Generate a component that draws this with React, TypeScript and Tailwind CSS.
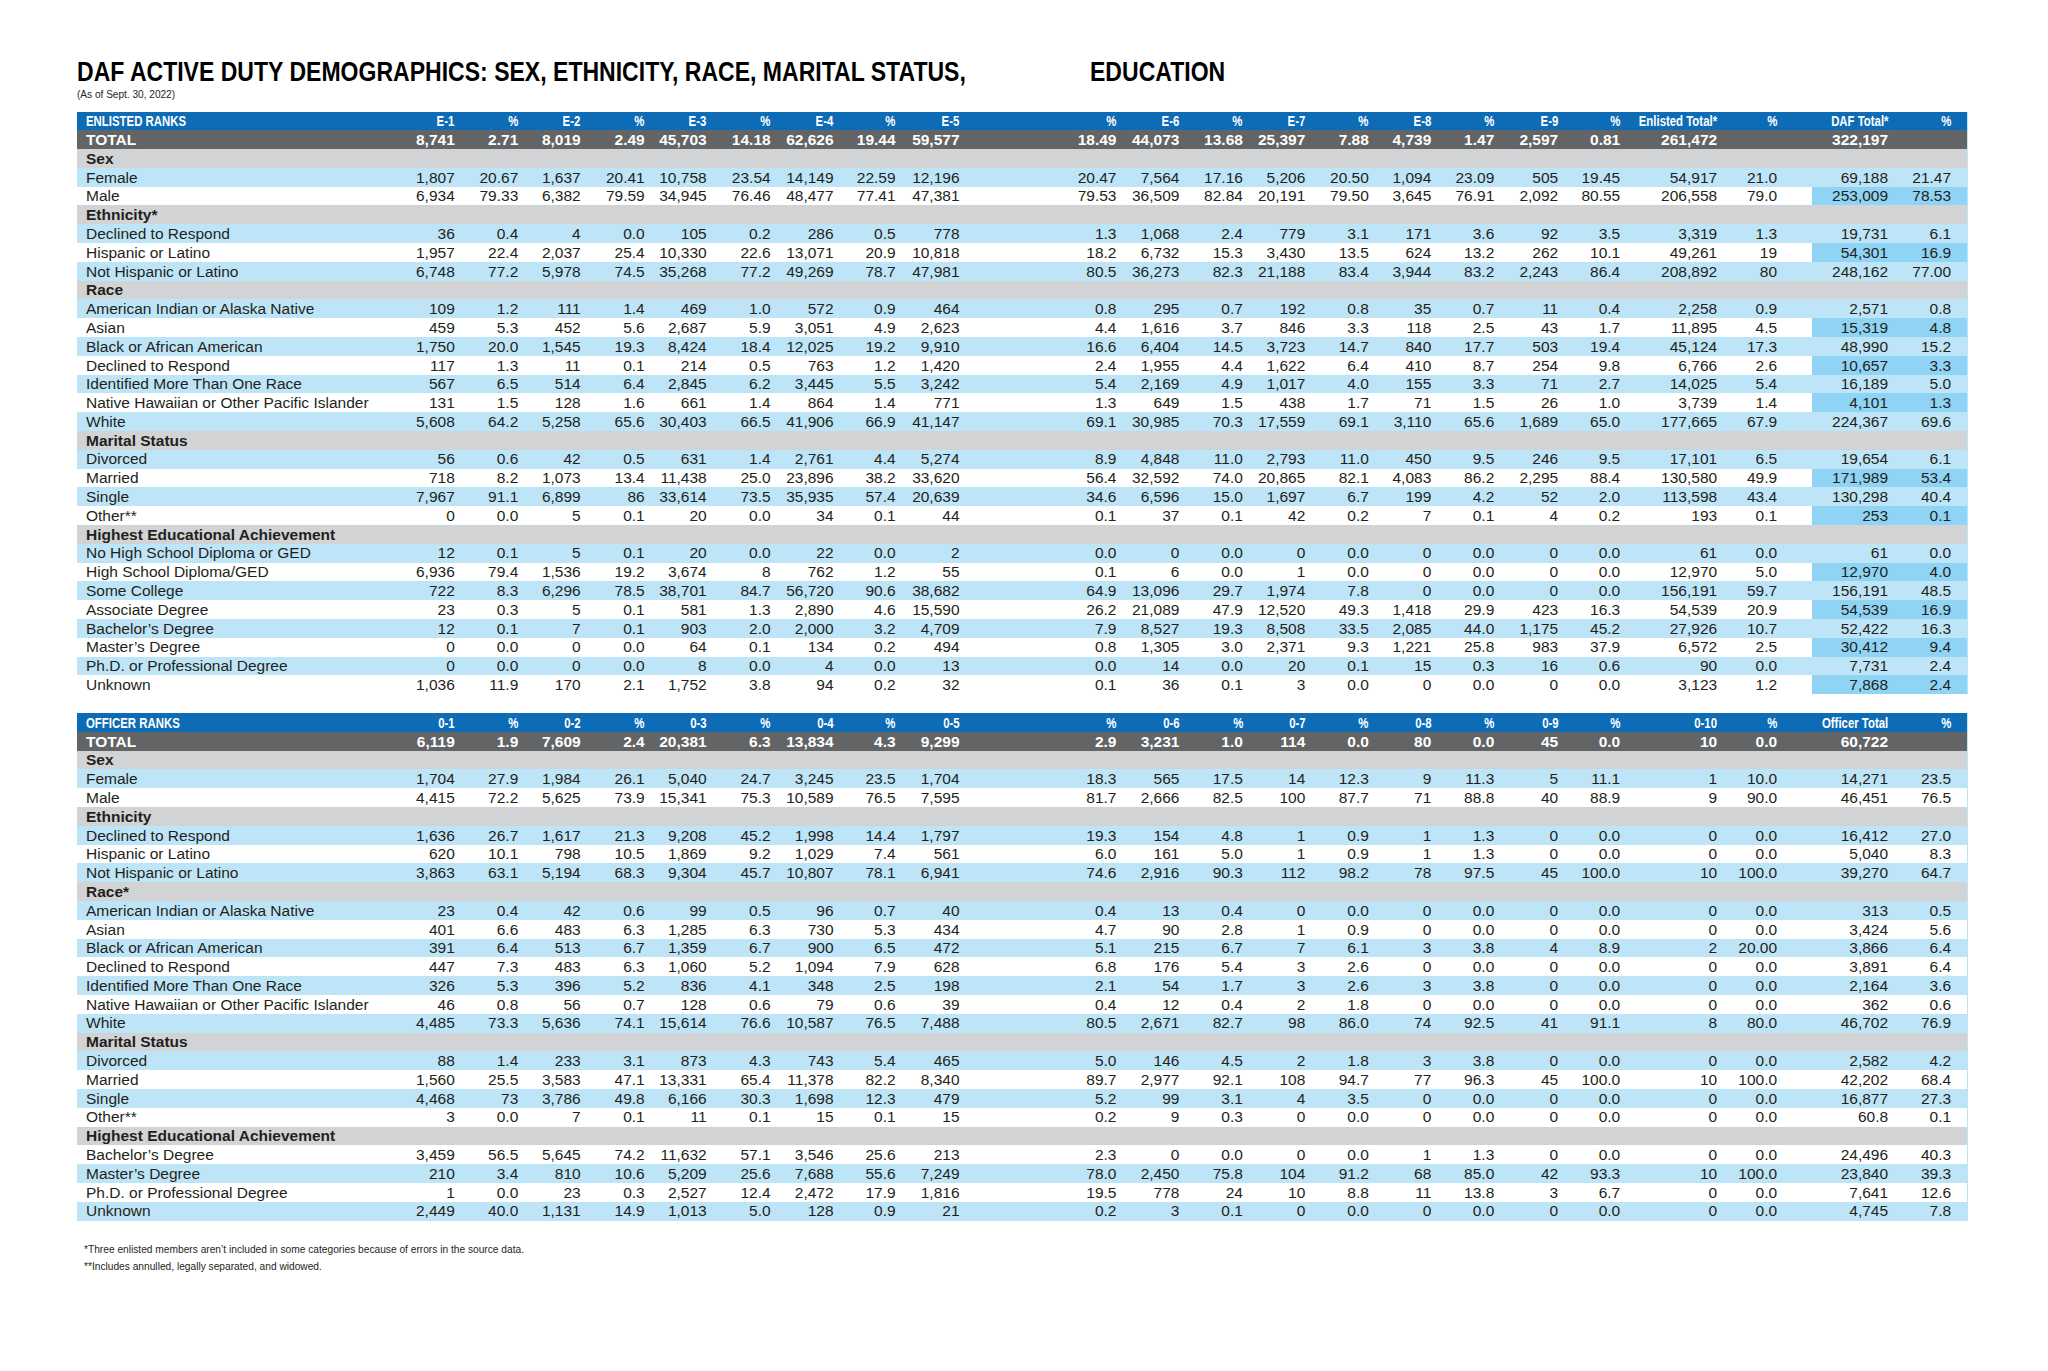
import React from 'react';

type Kind = 'head' | 'total' | 'section' | 'light' | 'white';

const W = [
  'w-[63px]', 'w-[63.5px]', 'w-[62.5px]', 'w-[64px]', 'w-[62px]', 'w-[64px]', 'w-[63px]', 'w-[62px]', 'w-[64px]',
  'w-[157px]', 'w-[63px]', 'w-[63.5px]', 'w-[62.5px]', 'w-[63.5px]', 'w-[62.5px]', 'w-[63px]', 'w-[64px]', 'w-[62px]',
  'w-[97px]', 'w-[60px]',
];

const bgFor: Record<Kind, string> = {
  head: 'bg-[#0d6cb5]',
  total: 'bg-[#636466]',
  section: 'bg-[#d1d3d4]',
  light: 'bg-[#bee5f7]',
  white: 'bg-white',
};

const textFor: Record<Kind, string> = {
  head: 'text-white font-bold text-[15px]',
  total: 'text-white font-bold text-[15.5px]',
  section: 'text-[#231f20] font-bold text-[15.5px]',
  light: 'text-[#231f20] text-[15.5px]',
  white: 'text-[#231f20] text-[15.5px]',
};

function Txt({ kind, children, left }: { kind: Kind; children: React.ReactNode; left?: boolean }) {
  if (kind === 'head') {
    return (
      <span className={`inline-block whitespace-nowrap scale-x-[0.76] ${left ? 'origin-left' : 'origin-right'}`}>{children}</span>
    );
  }
  return <span className="whitespace-nowrap">{children}</span>;
}

function Row({ label, vals, kind, hl }: { label: string; vals: string[]; kind: Kind; hl?: boolean }) {
  return (
    <div className={`flex h-[18.81px] items-center leading-none ${bgFor[kind]} ${textFor[kind]}`}>
      <div className="w-[315px] pl-[9px] flex items-center">
        <Txt kind={kind} left>
          {label}
        </Txt>
      </div>
      {W.map((w, i) => (
        <div key={i} className={`${w} flex justify-end`}>
          <Txt kind={kind}>{vals[i] ?? ''}</Txt>
        </div>
      ))}
      <div className="w-[35px]" />
      <div className={`w-[155px] h-full flex items-center ${hl ? 'bg-[#8fd4f4]' : ''}`}>
        <div className="w-[76px] flex justify-end">
          <Txt kind={kind}>{vals[20] ?? ''}</Txt>
        </div>
        <div className="w-[63px] flex justify-end">
          <Txt kind={kind}>{vals[21] ?? ''}</Txt>
        </div>
        <div className="w-[16px]" />
      </div>
    </div>
  );
}

type Spec = { s: string; k: Kind; hl?: boolean };

const parse = (v: string) => v.split(' ').map((x) => (x === '-' ? '' : x));

function Table({ head, cols, rows }: { head: string; cols: string[]; rows: Spec[] }) {
  return (
    <div className="w-[1891px] border-r border-[#bee5f7]">
      <Row label={head} vals={cols} kind="head" />
      {rows.map((r, i) => {
        const [label, v] = r.s.split('|');
        return <Row key={i} label={label} vals={v ? parse(v) : []} kind={r.k} hl={r.hl} />;
      })}
    </div>
  );
}

const enlistedCols = ['E-1', '%', 'E-2', '%', 'E-3', '%', 'E-4', '%', 'E-5', '%', 'E-6', '%', 'E-7', '%', 'E-8', '%', 'E-9', '%', 'Enlisted Total*', '%', 'DAF Total*', '%'];
const officerCols = ['0-1', '%', '0-2', '%', '0-3', '%', '0-4', '%', '0-5', '%', '0-6', '%', '0-7', '%', '0-8', '%', '0-9', '%', '0-10', '%', 'Officer Total', '%'];

const enlisted: Spec[] = [
  { s: 'TOTAL|8,741 2.71 8,019 2.49 45,703 14.18 62,626 19.44 59,577 18.49 44,073 13.68 25,397 7.88 4,739 1.47 2,597 0.81 261,472 - 322,197 -', k: 'total' },
  { s: 'Sex', k: 'section' },
  { s: 'Female|1,807 20.67 1,637 20.41 10,758 23.54 14,149 22.59 12,196 20.47 7,564 17.16 5,206 20.50 1,094 23.09 505 19.45 54,917 21.0 69,188 21.47', k: 'light' },
  { s: 'Male|6,934 79.33 6,382 79.59 34,945 76.46 48,477 77.41 47,381 79.53 36,509 82.84 20,191 79.50 3,645 76.91 2,092 80.55 206,558 79.0 253,009 78.53', k: 'white', hl: true },
  { s: 'Ethnicity*', k: 'section' },
  { s: 'Declined to Respond|36 0.4 4 0.0 105 0.2 286 0.5 778 1.3 1,068 2.4 779 3.1 171 3.6 92 3.5 3,319 1.3 19,731 6.1', k: 'light' },
  { s: 'Hispanic or Latino|1,957 22.4 2,037 25.4 10,330 22.6 13,071 20.9 10,818 18.2 6,732 15.3 3,430 13.5 624 13.2 262 10.1 49,261 19 54,301 16.9', k: 'white', hl: true },
  { s: 'Not Hispanic or Latino|6,748 77.2 5,978 74.5 35,268 77.2 49,269 78.7 47,981 80.5 36,273 82.3 21,188 83.4 3,944 83.2 2,243 86.4 208,892 80 248,162 77.00', k: 'light' },
  { s: 'Race', k: 'section' },
  { s: 'American Indian or Alaska Native|109 1.2 111 1.4 469 1.0 572 0.9 464 0.8 295 0.7 192 0.8 35 0.7 11 0.4 2,258 0.9 2,571 0.8', k: 'light' },
  { s: 'Asian|459 5.3 452 5.6 2,687 5.9 3,051 4.9 2,623 4.4 1,616 3.7 846 3.3 118 2.5 43 1.7 11,895 4.5 15,319 4.8', k: 'white', hl: true },
  { s: 'Black or African American|1,750 20.0 1,545 19.3 8,424 18.4 12,025 19.2 9,910 16.6 6,404 14.5 3,723 14.7 840 17.7 503 19.4 45,124 17.3 48,990 15.2', k: 'light' },
  { s: 'Declined to Respond|117 1.3 11 0.1 214 0.5 763 1.2 1,420 2.4 1,955 4.4 1,622 6.4 410 8.7 254 9.8 6,766 2.6 10,657 3.3', k: 'white', hl: true },
  { s: 'Identified More Than One Race|567 6.5 514 6.4 2,845 6.2 3,445 5.5 3,242 5.4 2,169 4.9 1,017 4.0 155 3.3 71 2.7 14,025 5.4 16,189 5.0', k: 'light' },
  { s: 'Native Hawaiian or Other Pacific Islander|131 1.5 128 1.6 661 1.4 864 1.4 771 1.3 649 1.5 438 1.7 71 1.5 26 1.0 3,739 1.4 4,101 1.3', k: 'white', hl: true },
  { s: 'White|5,608 64.2 5,258 65.6 30,403 66.5 41,906 66.9 41,147 69.1 30,985 70.3 17,559 69.1 3,110 65.6 1,689 65.0 177,665 67.9 224,367 69.6', k: 'light' },
  { s: 'Marital Status', k: 'section' },
  { s: 'Divorced|56 0.6 42 0.5 631 1.4 2,761 4.4 5,274 8.9 4,848 11.0 2,793 11.0 450 9.5 246 9.5 17,101 6.5 19,654 6.1', k: 'light' },
  { s: 'Married|718 8.2 1,073 13.4 11,438 25.0 23,896 38.2 33,620 56.4 32,592 74.0 20,865 82.1 4,083 86.2 2,295 88.4 130,580 49.9 171,989 53.4', k: 'white', hl: true },
  { s: 'Single|7,967 91.1 6,899 86 33,614 73.5 35,935 57.4 20,639 34.6 6,596 15.0 1,697 6.7 199 4.2 52 2.0 113,598 43.4 130,298 40.4', k: 'light' },
  { s: 'Other**|0 0.0 5 0.1 20 0.0 34 0.1 44 0.1 37 0.1 42 0.2 7 0.1 4 0.2 193 0.1 253 0.1', k: 'white', hl: true },
  { s: 'Highest Educational Achievement', k: 'section' },
  { s: 'No High School Diploma or GED|12 0.1 5 0.1 20 0.0 22 0.0 2 0.0 0 0.0 0 0.0 0 0.0 0 0.0 61 0.0 61 0.0', k: 'light' },
  { s: 'High School Diploma/GED|6,936 79.4 1,536 19.2 3,674 8 762 1.2 55 0.1 6 0.0 1 0.0 0 0.0 0 0.0 12,970 5.0 12,970 4.0', k: 'white', hl: true },
  { s: 'Some College|722 8.3 6,296 78.5 38,701 84.7 56,720 90.6 38,682 64.9 13,096 29.7 1,974 7.8 0 0.0 0 0.0 156,191 59.7 156,191 48.5', k: 'light' },
  { s: 'Associate Degree|23 0.3 5 0.1 581 1.3 2,890 4.6 15,590 26.2 21,089 47.9 12,520 49.3 1,418 29.9 423 16.3 54,539 20.9 54,539 16.9', k: 'white', hl: true },
  { s: 'Bachelor’s Degree|12 0.1 7 0.1 903 2.0 2,000 3.2 4,709 7.9 8,527 19.3 8,508 33.5 2,085 44.0 1,175 45.2 27,926 10.7 52,422 16.3', k: 'light' },
  { s: 'Master’s Degree|0 0.0 0 0.0 64 0.1 134 0.2 494 0.8 1,305 3.0 2,371 9.3 1,221 25.8 983 37.9 6,572 2.5 30,412 9.4', k: 'white', hl: true },
  { s: 'Ph.D. or Professional Degree|0 0.0 0 0.0 8 0.0 4 0.0 13 0.0 14 0.0 20 0.1 15 0.3 16 0.6 90 0.0 7,731 2.4', k: 'light' },
  { s: 'Unknown|1,036 11.9 170 2.1 1,752 3.8 94 0.2 32 0.1 36 0.1 3 0.0 0 0.0 0 0.0 3,123 1.2 7,868 2.4', k: 'white', hl: true },
];

const officer: Spec[] = [
  { s: 'TOTAL|6,119 1.9 7,609 2.4 20,381 6.3 13,834 4.3 9,299 2.9 3,231 1.0 114 0.0 80 0.0 45 0.0 10 0.0 60,722 -', k: 'total' },
  { s: 'Sex', k: 'section' },
  { s: 'Female|1,704 27.9 1,984 26.1 5,040 24.7 3,245 23.5 1,704 18.3 565 17.5 14 12.3 9 11.3 5 11.1 1 10.0 14,271 23.5', k: 'light' },
  { s: 'Male|4,415 72.2 5,625 73.9 15,341 75.3 10,589 76.5 7,595 81.7 2,666 82.5 100 87.7 71 88.8 40 88.9 9 90.0 46,451 76.5', k: 'white' },
  { s: 'Ethnicity', k: 'section' },
  { s: 'Declined to Respond|1,636 26.7 1,617 21.3 9,208 45.2 1,998 14.4 1,797 19.3 154 4.8 1 0.9 1 1.3 0 0.0 0 0.0 16,412 27.0', k: 'light' },
  { s: 'Hispanic or Latino|620 10.1 798 10.5 1,869 9.2 1,029 7.4 561 6.0 161 5.0 1 0.9 1 1.3 0 0.0 0 0.0 5,040 8.3', k: 'white' },
  { s: 'Not Hispanic or Latino|3,863 63.1 5,194 68.3 9,304 45.7 10,807 78.1 6,941 74.6 2,916 90.3 112 98.2 78 97.5 45 100.0 10 100.0 39,270 64.7', k: 'light' },
  { s: 'Race*', k: 'section' },
  { s: 'American Indian or Alaska Native|23 0.4 42 0.6 99 0.5 96 0.7 40 0.4 13 0.4 0 0.0 0 0.0 0 0.0 0 0.0 313 0.5', k: 'light' },
  { s: 'Asian|401 6.6 483 6.3 1,285 6.3 730 5.3 434 4.7 90 2.8 1 0.9 0 0.0 0 0.0 0 0.0 3,424 5.6', k: 'white' },
  { s: 'Black or African American|391 6.4 513 6.7 1,359 6.7 900 6.5 472 5.1 215 6.7 7 6.1 3 3.8 4 8.9 2 20.00 3,866 6.4', k: 'light' },
  { s: 'Declined to Respond|447 7.3 483 6.3 1,060 5.2 1,094 7.9 628 6.8 176 5.4 3 2.6 0 0.0 0 0.0 0 0.0 3,891 6.4', k: 'white' },
  { s: 'Identified More Than One Race|326 5.3 396 5.2 836 4.1 348 2.5 198 2.1 54 1.7 3 2.6 3 3.8 0 0.0 0 0.0 2,164 3.6', k: 'light' },
  { s: 'Native Hawaiian or Other Pacific Islander|46 0.8 56 0.7 128 0.6 79 0.6 39 0.4 12 0.4 2 1.8 0 0.0 0 0.0 0 0.0 362 0.6', k: 'white' },
  { s: 'White|4,485 73.3 5,636 74.1 15,614 76.6 10,587 76.5 7,488 80.5 2,671 82.7 98 86.0 74 92.5 41 91.1 8 80.0 46,702 76.9', k: 'light' },
  { s: 'Marital Status', k: 'section' },
  { s: 'Divorced|88 1.4 233 3.1 873 4.3 743 5.4 465 5.0 146 4.5 2 1.8 3 3.8 0 0.0 0 0.0 2,582 4.2', k: 'light' },
  { s: 'Married|1,560 25.5 3,583 47.1 13,331 65.4 11,378 82.2 8,340 89.7 2,977 92.1 108 94.7 77 96.3 45 100.0 10 100.0 42,202 68.4', k: 'white' },
  { s: 'Single|4,468 73 3,786 49.8 6,166 30.3 1,698 12.3 479 5.2 99 3.1 4 3.5 0 0.0 0 0.0 0 0.0 16,877 27.3', k: 'light' },
  { s: 'Other**|3 0.0 7 0.1 11 0.1 15 0.1 15 0.2 9 0.3 0 0.0 0 0.0 0 0.0 0 0.0 60.8 0.1', k: 'white' },
  { s: 'Highest Educational Achievement', k: 'section' },
  { s: 'Bachelor’s Degree|3,459 56.5 5,645 74.2 11,632 57.1 3,546 25.6 213 2.3 0 0.0 0 0.0 1 1.3 0 0.0 0 0.0 24,496 40.3', k: 'white' },
  { s: 'Master’s Degree|210 3.4 810 10.6 5,209 25.6 7,688 55.6 7,249 78.0 2,450 75.8 104 91.2 68 85.0 42 93.3 10 100.0 23,840 39.3', k: 'light' },
  { s: 'Ph.D. or Professional Degree|1 0.0 23 0.3 2,527 12.4 2,472 17.9 1,816 19.5 778 24 10 8.8 11 13.8 3 6.7 0 0.0 7,641 12.6', k: 'white' },
  { s: 'Unknown|2,449 40.0 1,131 14.9 1,013 5.0 128 0.9 21 0.2 3 0.1 0 0.0 0 0.0 0 0.0 0 0.0 4,745 7.8', k: 'light' },
];

export default function App() {
  return (
    <div className="w-[2048px] h-[1371px] bg-white pl-[77px] pt-[59px] font-['Liberation_Sans',Arial,sans-serif] text-[#231f20]">
      <div className="flex items-start text-[27px] font-bold leading-none text-black whitespace-nowrap">
        <div className="w-[1013px]">
          <span className="inline-block origin-left scale-x-[0.853]">DAF ACTIVE DUTY DEMOGRAPHICS: SEX, ETHNICITY, RACE, MARITAL STATUS,</span>
        </div>
        <span className="inline-block origin-left scale-x-[0.853]">EDUCATION</span>
      </div>
      <div className="mt-[3px] text-[10.5px] leading-none">
        <span className="inline-block origin-left scale-x-[0.96]">(As of Sept. 30, 2022)</span>
      </div>
      <div className="mt-[12px]">
        <Table head="ENLISTED RANKS" cols={enlistedCols} rows={enlisted} />
      </div>
      <div className="mt-[18.9px]">
        <Table head="OFFICER RANKS" cols={officerCols} rows={officer} />
      </div>
      <div className="mt-[20px] pl-[7px] text-[10.2px] leading-[17px]">
        <div>*Three enlisted members aren’t included in some categories because of errors in the source data.</div>
        <div>**Includes annulled, legally separated, and widowed.</div>
      </div>
    </div>
  );
}
